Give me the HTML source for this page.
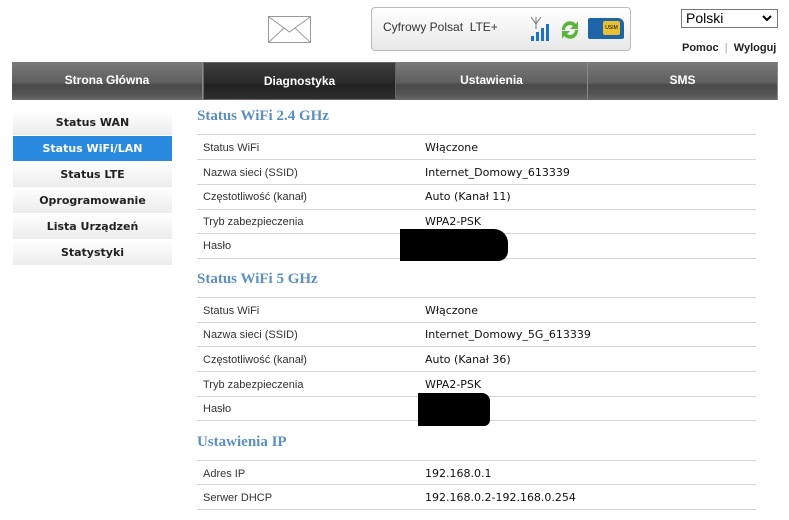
<!DOCTYPE html>
<html><head><meta charset="utf-8"><style>
*{margin:0;padding:0;box-sizing:border-box}
body{width:789px;height:520px;background:#fff;position:relative;overflow:hidden;font-family:"Liberation Sans",Arial,sans-serif}
.abs{position:absolute}
.tab{position:absolute;top:62px;height:38px;background:linear-gradient(#7a7a7a,#5e5e5e 55%,#4a4a4a 60%,#555 85%,#6a6a6a);color:#fff;font-weight:bold;font-size:12px;text-align:center;line-height:36px;border-right:1px solid #8a8a8a}
.side{position:absolute;left:13px;width:159px;height:26px;font-family:"DejaVu Sans",sans-serif;font-weight:bold;font-size:11px;text-align:center;line-height:26px;color:#222;background:linear-gradient(#fff,#ececec);border-bottom:1px solid #fff}
.h{position:absolute;left:197px;font-family:"Liberation Serif",serif;font-weight:bold;font-size:15px;color:#5b8fc4}
.ln{position:absolute;left:197px;width:559px;height:1px;background:#d4d4d4}
.l{position:absolute;left:203px;font-size:11px;color:#333}
.v{position:absolute;left:425px;font-family:"DejaVu Sans",sans-serif;font-size:11px;color:#111}
</style></head><body>
<div class="abs" style="left:268px;top:16px;width:43px;height:27px;border:1px solid #999;background:#fff">
<svg width="41" height="25" style="position:absolute;left:0;top:0"><path d="M0 0L20.5 15L41 0M0 25L15 11M41 25L26 11" stroke="#999" fill="none"/></svg></div>
<div class="abs" style="left:371px;top:7px;width:260px;height:44px;border:1px solid #bbb;border-radius:4px;background:linear-gradient(#fff,#e8e8e8)"></div>
<div class="abs" style="left:383px;top:20px;font-size:12px;color:#333">Cyfrowy Polsat&nbsp;&nbsp;LTE+</div>
<svg class="abs" style="left:528px;top:15px" width="24" height="27"><path d="M3 2L8 9L13 2M8 2V14" stroke="#777" fill="none"/><rect x="3" y="21" width="3" height="5" fill="#1a73c7"/><rect x="8" y="17" width="3" height="9" fill="#1a73c7"/><rect x="13" y="13" width="3" height="13" fill="#1a73c7"/><rect x="18" y="9" width="3" height="17" fill="#1a73c7"/></svg>
<svg class="abs" style="left:558px;top:18px" width="24" height="24"><path d="M4 12A8 8 0 0 1 18 6L20 3V11H12L15 8A5 5 0 0 0 7 12Z" fill="#5ab43c"/><path d="M20 12A8 8 0 0 1 6 18L4 21V13H12L9 16A5 5 0 0 0 17 12Z" fill="#5ab43c"/></svg>
<div class="abs" style="left:588px;top:18px;width:36px;height:21px;background:#1e64a8;border-radius:2px 6px 2px 2px"><div style="position:absolute;left:15px;top:3px;width:17px;height:14px;background:#e8c030;border-radius:2px;font-size:5px;text-align:center;line-height:14px">USIM</div></div>
<div class="abs" style="left:681px;top:9px;width:97px;height:19px;border:1px solid #777;font-size:14px;line-height:17px;padding-left:4px;background:#fff">Polski<svg style="position:absolute;right:5px;top:5px" width="10" height="7"><path d="M1 1L5 5L9 1" stroke="#000" stroke-width="2" fill="none"/></svg></div>
<div class="abs" style="left:682px;top:42px;font-size:11px;font-weight:bold;color:#222">Pomoc <span style="color:#aaa;font-weight:normal">&nbsp;|&nbsp;</span> Wyloguj</div>
<div class="tab" style="left:12px;width:191px">Strona Główna</div>
<div class="tab" style="left:203px;width:193px;background:linear-gradient(#3c3c3c,#2a2a2a 55%,#222 60%,#2e2e2e);border:1px solid #666">Diagnostyka</div>
<div class="tab" style="left:396px;width:192px">Ustawienia</div>
<div class="tab" style="left:588px;width:190px">SMS</div>
<div class="side" style="top:110px">Status WAN</div>
<div class="side" style="top:136px;background:#2a8ae0;color:#fff">Status WiFi/LAN</div>
<div class="side" style="top:162px">Status LTE</div>
<div class="side" style="top:188px">Oprogramowanie</div>
<div class="side" style="top:214px">Lista Urządzeń</div>
<div class="side" style="top:240px">Statystyki</div>

<div class="h" style="top:108px">Status WiFi 2.4 GHz</div>
<div class="ln" style="top:134px"></div><div class="ln" style="top:159px"></div><div class="ln" style="top:184px"></div><div class="ln" style="top:209px"></div><div class="ln" style="top:233px"></div><div class="ln" style="top:258px"></div>
<div class="l" style="top:142px">Status WiFi</div><div class="v" style="top:141px">Włączone</div>
<div class="l" style="top:167px">Nazwa sieci (SSID)</div><div class="v" style="top:166px">Internet_Domowy_613339</div>
<div class="l" style="top:191px">Częstotliwość (kanał)</div><div class="v" style="top:190px">Auto (Kanał 11)</div>
<div class="l" style="top:216px">Tryb zabezpieczenia</div><div class="v" style="top:215px">WPA2-PSK</div>
<div class="l" style="top:240px">Hasło</div>
<div class="abs" style="left:400px;top:229px;width:108px;height:32px;background:#000;border-radius:0 14px 10px 0"></div>

<div class="h" style="top:271px">Status WiFi 5 GHz</div>
<div class="ln" style="top:297px"></div><div class="ln" style="top:322px"></div><div class="ln" style="top:346px"></div><div class="ln" style="top:371px"></div><div class="ln" style="top:396px"></div><div class="ln" style="top:420px"></div>
<div class="l" style="top:305px">Status WiFi</div><div class="v" style="top:304px">Włączone</div>
<div class="l" style="top:329px">Nazwa sieci (SSID)</div><div class="v" style="top:328px">Internet_Domowy_5G_613339</div>
<div class="l" style="top:354px">Częstotliwość (kanał)</div><div class="v" style="top:353px">Auto (Kanał 36)</div>
<div class="l" style="top:379px">Tryb zabezpieczenia</div><div class="v" style="top:378px">WPA2-PSK</div>
<div class="l" style="top:403px">Hasło</div>
<div class="abs" style="left:418px;top:393px;width:72px;height:33px;background:#000;border-radius:0 8px 6px 0"></div>

<div class="h" style="top:434px">Ustawienia IP</div>
<div class="ln" style="top:460px"></div><div class="ln" style="top:484px"></div><div class="ln" style="top:509px"></div>
<div class="l" style="top:468px">Adres IP</div><div class="v" style="top:467px">192.168.0.1</div>
<div class="l" style="top:492px">Serwer DHCP</div><div class="v" style="top:491px">192.168.0.2-192.168.0.254</div>
</body></html>
